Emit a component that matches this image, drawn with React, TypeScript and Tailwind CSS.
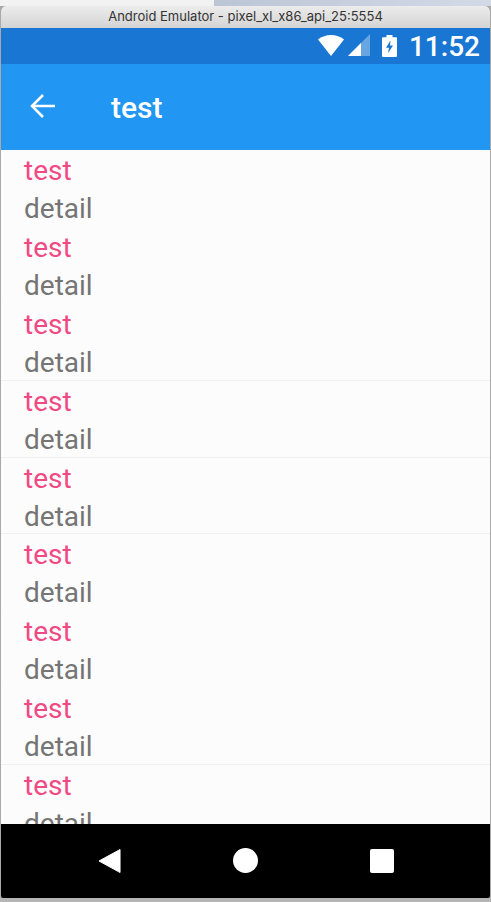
import React from "react";

const rowBorders = [
  "border-[#fcfcfc]",
  "border-[#fbfbfb]",
  "border-[#f0f0f0]",
  "border-[#f0f0f0]",
  "border-[#f0f0f0]",
  "border-[#fbfbfb]",
  "border-[#fbfbfb]",
  "border-[#f0f0f0]",
  "border-[#fafafa]",
];

function StatusIcons() {
  return (
    <div className="flex items-center gap-[12px] pb-[1px]">
      <svg width="52" height="23" viewBox="0 0 52 23">
        <path d="M0 5.5 C7 -0.5 19 -0.5 26 5.5 L13 22 Z" fill="#ffffff" />
        <path d="M30 22 L52 0 V22 Z" fill="#ffffff" fillOpacity="0.35" />
        <path d="M30 22 L43 9 V22 Z" fill="#ffffff" />
      </svg>
      <svg width="15" height="22" viewBox="0 0 15 24" preserveAspectRatio="none">
        <path
          fillRule="evenodd"
          d="M4.5 0 H10.5 V2.5 H14 a1 1 0 0 1 1 1 V23 a1 1 0 0 1 -1 1 H1 a1 1 0 0 1 -1 -1 V3.5 a1 1 0 0 1 1 -1 H4.5 Z M8.5 6 L4 14 H7 L6 20 L11 11.5 H8 Z"
          fill="#ffffff"
        />
      </svg>
    </div>
  );
}

export default function App() {
  return (
    <div className="flex h-[902px] w-[491px] flex-col overflow-hidden bg-[#a8a8a8] font-['Roboto',sans-serif]">
      <div className="flex h-[6px] shrink-0">
        <div className="w-[214px] bg-[#f2f2f2]" />
        <div className="flex-1 bg-gradient-to-r from-[#bcc5d6] to-[#d3dae6]" />
      </div>
      <div className="flex min-h-0 flex-1 flex-col overflow-hidden rounded-t-[6px] rounded-b-[3px] border-x border-[#a9a9a9]">
        <div className="flex h-[22px] shrink-0 items-center justify-center bg-gradient-to-b from-[#ececec] to-[#d4d4d4] font-['Inter',sans-serif] text-[13px] text-[#333333]">
          Android Emulator - pixel_xl_x86_api_25:5554
        </div>
        <div className="flex h-[36px] shrink-0 items-center justify-end gap-[12px] bg-[#1976d2] pr-[10px] text-[28px] text-white">
          <StatusIcons />
          <span className="pt-[2px] font-medium leading-none">11:52</span>
        </div>
        <div className="flex h-[86px] shrink-0 items-center bg-[#2196f3] pl-[29px] text-white">
          <svg width="25" height="24" viewBox="0 0 25 24" fill="none" stroke="#ffffff" strokeWidth="2.6" className="mb-[2px]">
            <path d="M25 12 H3" />
            <path d="M13 1 L2 12 L13 23" />
          </svg>
          <span className="ml-[56px] pt-[2px] text-[30px] font-medium leading-none">test</span>
        </div>
        <div className="min-h-0 flex-1 overflow-hidden bg-[#fcfcfc]">
          {rowBorders.map((border, i) => (
            <div key={i} className={`h-[76.9px] border-b pl-[23px] text-[28px] ${border}`}>
              <div className="h-[38px] leading-[41px] text-[#f04a85]">test</div>
              <div className="h-[38px] leading-[42px] text-[#757575]">detail</div>
            </div>
          ))}
        </div>
        <div className="flex h-[74px] shrink-0 items-center justify-center gap-[112px] bg-black pb-[1px]">
          <svg width="23" height="26" viewBox="0 0 24 26">
            <path d="M23 1 V25 L1 13 Z" fill="#ffffff" stroke="#ffffff" strokeLinejoin="round" />
          </svg>
          <svg width="25" height="25" viewBox="0 0 25 25">
            <circle cx="12.5" cy="12.5" r="12.5" fill="#ffffff" />
          </svg>
          <svg width="24" height="24" viewBox="0 0 24 24">
            <rect width="24" height="24" rx="2" fill="#ffffff" />
          </svg>
        </div>
      </div>
      <div className="h-[4px] shrink-0 bg-[#b5b5b5]" />
    </div>
  );
}
